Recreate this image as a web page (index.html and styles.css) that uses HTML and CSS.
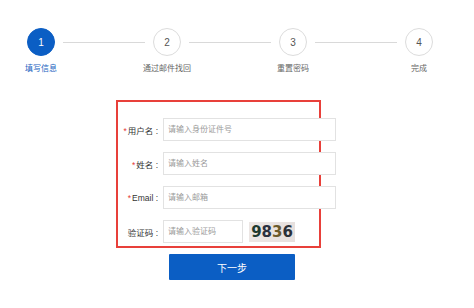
FILE: index.html
```html
<!DOCTYPE html>
<html lang="zh">
<head>
<meta charset="utf-8">
<link rel="stylesheet" href="styles.css">
</head>
<body>
<div class="steps">
  <div class="step active"><div class="circle">1</div><div class="label">填写信息</div></div>
  <div class="line"></div>
  <div class="step"><div class="circle">2</div><div class="label">通过邮件找回</div></div>
  <div class="line"></div>
  <div class="step"><div class="circle">3</div><div class="label">重置密码</div></div>
  <div class="line"></div>
  <div class="step"><div class="circle">4</div><div class="label">完成</div></div>
</div>
<div class="form">
  <div class="row">
    <label class="lbl"><span class="req">*</span>用户名 :</label>
    <input class="inp" type="text" placeholder="请输入身份证件号">
  </div>
  <div class="row">
    <label class="lbl"><span class="req">*</span>姓名 :</label>
    <input class="inp" type="text" placeholder="请输入姓名">
  </div>
  <div class="row">
    <label class="lbl"><span class="req">*</span>Email :</label>
    <input class="inp" type="text" placeholder="请输入邮箱">
  </div>
  <div class="row">
    <label class="lbl">验证码 :</label>
    <input class="inp short" type="text" placeholder="请输入验证码">
    <div class="captcha"><span class="d1">9</span><span class="d2">8</span><span class="d3">3</span><span class="d4">6</span></div>
  </div>
</div>
<button class="next">下一步</button>
</body>
</html>
```
FILE: styles.css
```css
html, body {
  margin: 0;
  padding: 0;
  background: #fff;
  font-family: "Liberation Sans", "Noto Sans CJK SC", sans-serif;
  width: 474px;
  height: 308px;
  overflow: hidden;
}
.steps {
  display: flex;
  align-items: flex-start;
  padding: 28px 0 0 27px;
}
.step {
  width: 28px;
  display: flex;
  flex-direction: column;
  align-items: center;
}
.circle {
  width: 28px;
  height: 28px;
  box-sizing: border-box;
  border-radius: 50%;
  border: 1px solid #dcdcdc;
  background: #fff;
  color: #555;
  font-size: 10px;
  display: flex;
  align-items: center;
  justify-content: center;
}
.step.active .circle {
  background: #0b5ec4;
  border-color: #0b5ec4;
  color: #fff;
}
.label {
  margin-top: 8px;
  font-size: 8px;
  line-height: 9px;
  color: #666;
  white-space: nowrap;
}
.step.active .label {
  color: #1a62c0;
}
.line {
  width: 82px;
  height: 1px;
  margin: 14px 8px 0;
  background: #d9d9d9;
}
.line:last-of-type {
  width: 84px;
}
.form {
  box-sizing: border-box;
  width: 205px;
  height: 148px;
  margin: 27px 0 0 116px;
  border: 2px solid #e8403a;
  padding-top: 16px;
  display: flex;
  flex-direction: column;
  gap: 11px;
}
.row {
  display: flex;
  align-items: center;
  height: 23px;
}
.lbl {
  width: 40px;
  flex: none;
  text-align: right;
  font-size: 8.5px;
  color: #333;
  white-space: nowrap;
}
.req {
  color: #e53935;
  margin-right: 1px;
}
.inp {
  flex: none;
  margin-left: 5px;
  width: 173px;
  height: 23px;
  box-sizing: border-box;
  border: 1px solid #e2e2e2;
  padding: 0 4px;
  font-size: 8px;
  font-family: "Liberation Sans", "Noto Sans CJK SC", sans-serif;
  outline: none;
}
.inp::placeholder {
  color: #9a9a9a;
}
.inp.short {
  width: 80px;
}
.captcha {
  flex: none;
  margin-left: 6px;
  width: 46px;
  height: 20px;
  background: linear-gradient(90deg, #ece6e4, #e6e0de);
  display: flex;
  align-items: center;
  justify-content: center;
  font-family: "DejaVu Sans", sans-serif;
  font-weight: bold;
  font-size: 15px;
}
.d1 { color: #1f3b30; }
.d2 { color: #2b3140; }
.d3 { color: #6b5a2c; }
.d4 { color: #2a3038; }
.next {
  display: block;
  margin: 6px 0 0 169px;
  width: 126px;
  height: 26px;
  border: none;
  border-radius: 1px;
  background: #0b5ec4;
  color: #fff;
  font-size: 10px;
  font-family: "Liberation Sans", "Noto Sans CJK SC", sans-serif;
  padding: 0;
}
```
